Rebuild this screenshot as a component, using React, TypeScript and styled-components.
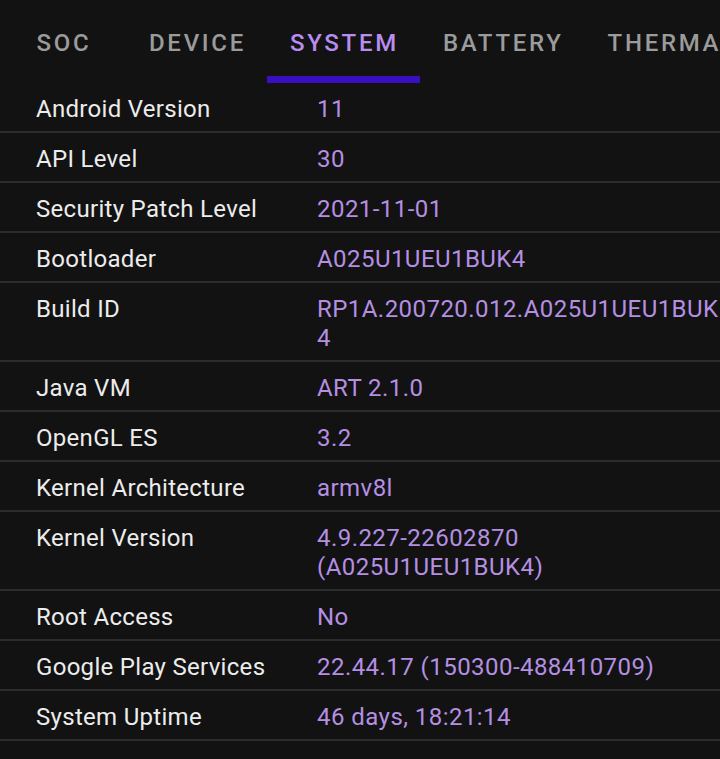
import React, { FC } from "react";
import styled, { createGlobalStyle } from "styled-components";

const GlobalStyle = createGlobalStyle`
  html, body {
    margin: 0;
    padding: 0;
    background: #121212;
  }
  body {
    font-family: Roboto, "Noto Sans", sans-serif;
  }
`;

const Screen = styled.div`
  width: 720px;
  min-height: 759px;
  background: #121212;
  overflow: hidden;
`;

const TabBar = styled.div`
  display: flex;
  height: 83px;
  white-space: nowrap;
`;

const Tab = styled.div<{ active?: boolean; minWidth?: number }>`
  position: relative;
  flex-shrink: 0;
  display: flex;
  align-items: center;
  justify-content: center;
  box-sizing: border-box;
  min-width: ${(p) => p.minWidth || 0}px;
  padding: 10px 21px 7px 23px;
  font-size: 24px;
  font-weight: 500;
  letter-spacing: 2.7px;
  text-transform: uppercase;
  color: ${(p) => (p.active ? "#b78df0" : "#9b9b9b")};
`;

const Indicator = styled.span`
  position: absolute;
  left: 0;
  right: 0;
  bottom: 0;
  height: 7px;
  background: #3a0fc2;
`;

const List = styled.div`
  display: flex;
  flex-direction: column;
`;

const Row = styled.div`
  display: flex;
  padding: 12px 0 7px;
  border-bottom: 2px solid #2c2c2c;
  font-size: 24px;
  line-height: 29px;
`;

const Label = styled.div`
  flex: 0 0 281px;
  padding-left: 36px;
  color: #ececec;
  letter-spacing: 0.3px;
`;

const Value = styled.div`
  flex: 1;
  min-width: 0;
  color: #b48fe2;
  letter-spacing: 0.45px;
  overflow-wrap: anywhere;
`;

type Item = { label: string; value: string };

const tabs = [
  { name: "SOC", minWidth: 126 },
  { name: "DEVICE" },
  { name: "SYSTEM", active: true },
  { name: "BATTERY" },
  { name: "THERMAL" },
];

const items: Item[] = [
  { label: "Android Version", value: "11" },
  { label: "API Level", value: "30" },
  { label: "Security Patch Level", value: "2021-11-01" },
  { label: "Bootloader", value: "A025U1UEU1BUK4" },
  { label: "Build ID", value: "RP1A.200720.012.A025U1UEU1BUK4" },
  { label: "Java VM", value: "ART 2.1.0" },
  { label: "OpenGL ES", value: "3.2" },
  { label: "Kernel Architecture", value: "armv8l" },
  { label: "Kernel Version", value: "4.9.227-22602870 (A025U1UEU1BUK4)" },
  { label: "Root Access", value: "No" },
  { label: "Google Play Services", value: "22.44.17 (150300-488410709)" },
  { label: "System Uptime", value: "46 days, 18:21:14" },
];

const App: FC = () => {
  return (
    <Screen>
      <GlobalStyle />
      <TabBar>
        {tabs.map((t) => (
          <Tab key={t.name} active={t.active} minWidth={t.minWidth}>
            {t.name}
            {t.active && <Indicator />}
          </Tab>
        ))}
      </TabBar>
      <List>
        {items.map((it) => (
          <Row key={it.label}>
            <Label>{it.label}</Label>
            <Value>{it.value}</Value>
          </Row>
        ))}
      </List>
    </Screen>
  );
};

export default App;
